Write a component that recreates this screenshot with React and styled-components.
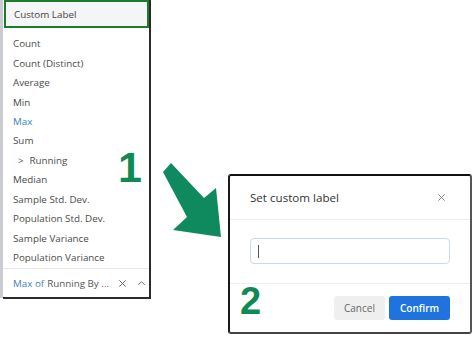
import React from 'react'
import styled, { createGlobalStyle } from 'styled-components'

const GlobalStyle = createGlobalStyle`
    html, body {
        margin: 0;
        padding: 0;
        background: #ffffff;
        font-family: 'Open Sans', 'Noto Sans', sans-serif;
    }
`

const Page = styled.div`
    position: relative;
    width: 474px;
    height: 345px;
    overflow: hidden;
    display: flex;
    align-items: flex-start;
    background: #fff;
`

const Edge = styled.div`
    width: 3px;
    height: 298px;
    background: #c9ccd0;
`

const Panel = styled.div`
    width: 148px;
    height: 299px;
    box-sizing: border-box;
    border-right: 2px solid #2b2b2b;
    border-bottom: 2px solid #2b2b2b;
    display: flex;
    flex-direction: column;
`

const LabelBox = styled.div`
    margin: 0 0 0 1px;
    height: 28px;
    box-sizing: border-box;
    border: 2px solid #1e7b2e;
    background: #f3f5f7;
    display: flex;
    align-items: center;
    padding-left: 8px;
    font-size: 9.8px;
    color: #444;
`

const List = styled.div`
    display: flex;
    flex-direction: column;
    padding-top: 6px;
`

const Item = styled.div`
    height: 19.45px;
    display: flex;
    align-items: center;
    padding-left: ${p => (p.$indent ? '15px' : '10px')};
    font-size: 9.8px;
    color: ${p => (p.$active ? '#3f7fc0' : '#4a4a4a')};
    white-space: nowrap;
`

const Chevron = styled.span`
    margin-right: 6px;
    font-size: 9.5px;
`

const Footer = styled.div`
    margin-top: auto;
    height: 28px;
    border-top: 1px solid #e8e8e8;
    display: flex;
    align-items: center;
    padding-left: 10px;
    font-size: 9.8px;
    color: #555;
    white-space: nowrap;
`

const Blue = styled.span`
    color: #3f7fc0;
    margin-right: 3px;
`

const FooterIcon = styled.span`
    display: flex;
    align-items: center;
    margin-left: ${p => p.$gap}px;
`

const Dialog = styled.div`
    margin: 174px 0 0 77px;
    width: 244px;
    height: 160px;
    box-sizing: border-box;
    border-top: 2px solid #111;
    border-left: 2px solid #1a1a1a;
    border-right: 2px solid #555;
    border-bottom: 2px solid #444;
    border-radius: 3px;
    background: #fff;
    display: flex;
    flex-direction: column;
`

const DialogHead = styled.div`
    height: 44px;
    box-sizing: border-box;
    border-bottom: 1px solid #eceef0;
    display: flex;
    align-items: center;
    justify-content: space-between;
    padding: 0 24px 0 20px;
    font-size: 11.6px;
    color: #333;
`

const DialogBody = styled.div`
    flex: 1;
    padding: 18px 20px 0 20px;
    border-bottom: 1px solid #eceef0;
`

const Input = styled.div`
    height: 26px;
    box-sizing: border-box;
    border: 1px solid #c9daea;
    border-radius: 4px;
    display: flex;
    align-items: center;
    padding-left: 7px;
`

const Caret = styled.div`
    width: 1px;
    height: 13px;
    background: #555;
`

const DialogFoot = styled.div`
    height: 48px;
    display: flex;
    align-items: center;
    justify-content: flex-end;
    gap: 4px;
    padding-right: 20px;
`

const Button = styled.button`
    height: 24px;
    border: none;
    border-radius: 3px;
    padding: 0 ${p => (p.$primary ? '11px' : '10px')};
    font-family: 'Open Sans', 'Noto Sans', sans-serif;
    font-size: 10px;
    font-weight: ${p => (p.$primary ? 600 : 400)};
    background: ${p => (p.$primary ? '#1e74dc' : '#efefef')};
    color: ${p => (p.$primary ? '#fff' : '#666')};
`

const Number = styled.div`
    position: absolute;
    left: ${p => p.$x}px;
    top: ${p => p.$y}px;
    font-family: 'Liberation Sans', Arial, sans-serif;
    font-weight: 700;
    font-size: ${p => p.$size}px;
    line-height: 1;
    color: #0f8a55;
`

const Arrow = styled.svg`
    position: absolute;
    left: 160px;
    top: 160px;
`

const items = [
    'Count',
    'Count (Distinct)',
    'Average',
    'Min',
    'Max',
    'Sum',
    'Running',
    'Median',
    'Sample Std. Dev.',
    'Population Std. Dev.',
    'Sample Variance',
    'Population Variance',
]

const App = () => {
    return (
        <Page>
            <GlobalStyle />
            <Edge />
            <Panel>
                <LabelBox>Custom Label</LabelBox>
                <List>
                    {items.map(name => (
                        <Item
                            key={name}
                            $active={name === 'Max'}
                            $indent={name === 'Running'}
                        >
                            {name === 'Running' && <Chevron>&gt;</Chevron>}
                            {name}
                        </Item>
                    ))}
                </List>
                <Footer>
                    <Blue>Max of</Blue>Running By ...
                    <FooterIcon $gap={9}>
                        <svg width="9" height="9" viewBox="0 0 10 10">
                            <path d="M1.5 1.5 L8.5 8.5 M8.5 1.5 L1.5 8.5" stroke="#666" strokeWidth="1.1" />
                        </svg>
                    </FooterIcon>
                    <FooterIcon $gap={10}>
                        <svg width="9" height="9" viewBox="0 0 10 10">
                            <path d="M1.5 6.5 L5 3 L8.5 6.5" stroke="#666" strokeWidth="1.1" fill="none" />
                        </svg>
                    </FooterIcon>
                </Footer>
            </Panel>
            <Dialog>
                <DialogHead>
                    <span>Set custom label</span>
                    <svg width="9" height="9" viewBox="0 0 10 10">
                        <path d="M1.5 1.5 L8.5 8.5 M8.5 1.5 L1.5 8.5" stroke="#777" strokeWidth="1" />
                    </svg>
                </DialogHead>
                <DialogBody>
                    <Input>
                        <Caret />
                    </Input>
                </DialogBody>
                <DialogFoot>
                    <Button>Cancel</Button>
                    <Button $primary>Confirm</Button>
                </DialogFoot>
            </Dialog>
            <Number $x={118} $y={146} $size={43}>1</Number>
            <Number $x={240} $y={282} $size={38}>2</Number>
            <Arrow width="66" height="80" viewBox="0 0 66 80">
                <polygon points="3,12 11,3 44,38 56,28 61,77 13,70 27,57" fill="#0f8a5f" />
            </Arrow>
        </Page>
    )
}

export default App
